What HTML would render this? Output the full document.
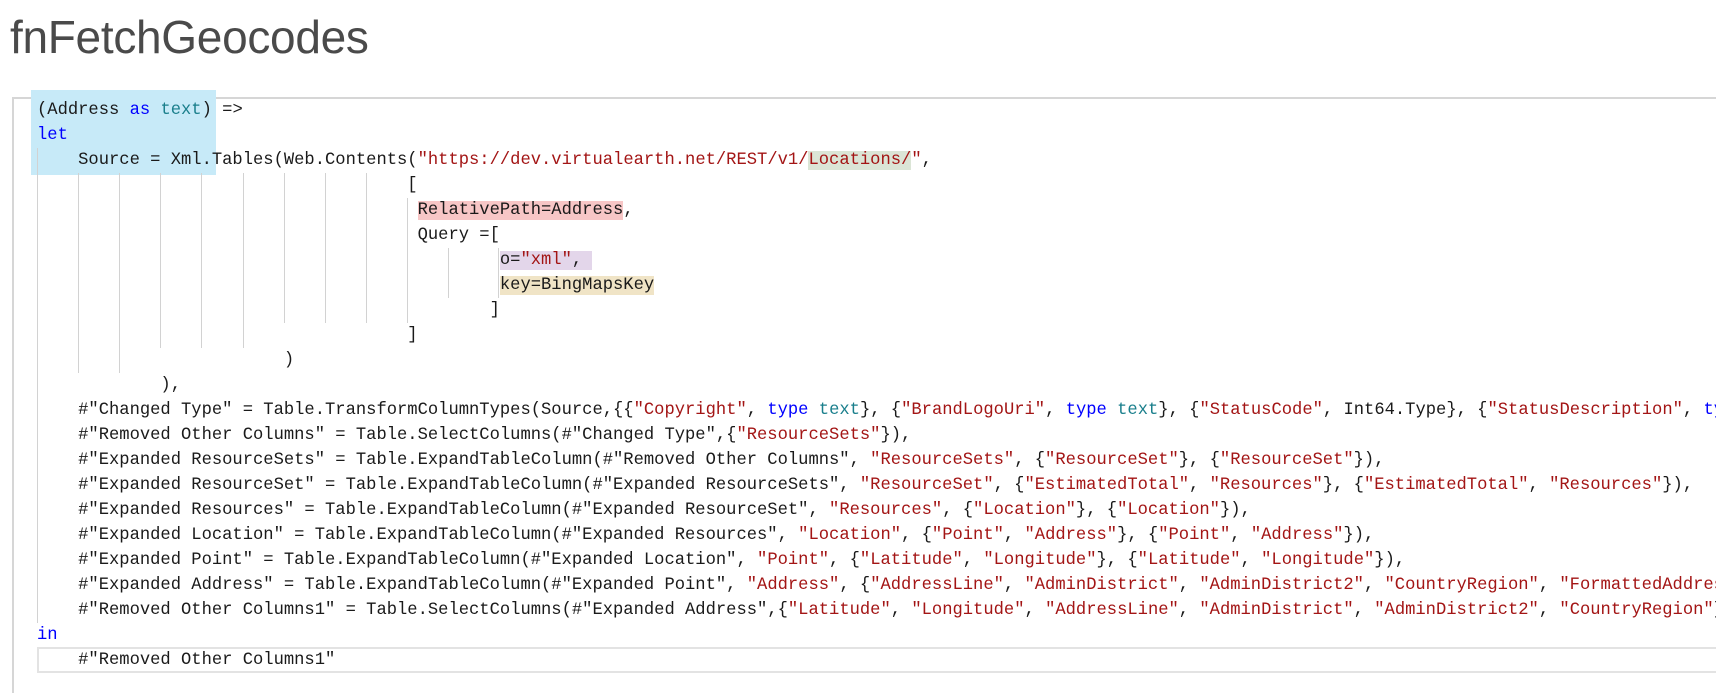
<!DOCTYPE html>
<html><head><meta charset="utf-8"><style>
html,body{margin:0;padding:0;background:#fff;width:1716px;height:693px;overflow:hidden;position:relative}
.t{position:absolute;left:10px;top:14px;font:46px/46px "Liberation Sans",sans-serif;color:#4a4a4a;letter-spacing:-0.3px}
.box{position:absolute;left:12px;top:97px;width:1760px;height:620px;border-left:2px solid #d6d6d6;border-top:2px solid #d6d6d6}
.hl{position:absolute;left:31px;top:90px;width:185px;height:85px;background:#c7eaf8}
.cur{position:absolute;left:37px;top:647px;width:1720px;height:22px;border:2px solid #e3e3e3;border-right:none}
.wrap{position:absolute;left:0;top:0;width:1716px;height:693px;overflow:hidden}
.l{position:absolute;left:37px;height:25px;font:17.15px/25px "Liberation Mono",monospace;white-space:pre;color:#1a1a1a}
.k{color:#0000ff}.y{color:#1a7f8c}.s{color:#a31515}
.g{position:absolute;width:1px;background:#d2d2d2}
.b1{background:#dbe5d6}.b2{background:#f7c6c6}.b3{background:#e3d6ea}.b4{background:#f0e4c6}
</style></head><body><div class="wrap">
<div class="t">fnFetchGeocodes</div>
<div class="box"></div>
<div class="hl"></div>
<div class="cur"></div>
<div class="g" style="left:37px;top:148px;height:475px"></div>
<div class="g" style="left:78px;top:173px;height:200px"></div>
<div class="g" style="left:119px;top:173px;height:200px"></div>
<div class="g" style="left:160px;top:173px;height:175px"></div>
<div class="g" style="left:201px;top:173px;height:175px"></div>
<div class="g" style="left:243px;top:173px;height:175px"></div>
<div class="g" style="left:284px;top:173px;height:150px"></div>
<div class="g" style="left:325px;top:173px;height:150px"></div>
<div class="g" style="left:366px;top:173px;height:150px"></div>
<div class="g" style="left:407px;top:198px;height:125px"></div>
<div class="g" style="left:448px;top:248px;height:50px"></div>
<div class="g" style="left:498px;top:248px;height:50px"></div>

<div class="l" style="top:98px">(Address <span class="k">as</span> <span class="y">text</span>) =&gt;</div>
<div class="l" style="top:123px"><span class="k">let</span></div>
<div class="l" style="top:148px">    Source = Xml.Tables(Web.Contents(<span class="s">"https://dev.virtualearth.net/REST/v1/<span class="b1">Locations/</span>"</span>,</div>
<div class="l" style="top:173px">                                    [</div>
<div class="l" style="top:198px">                                     <span class="b2">RelativePath=Address</span>,</div>
<div class="l" style="top:223px">                                     Query =[</div>
<div class="l" style="top:248px">                                             <span class="b3">o=<span class="s">"xml"</span>, </span></div>
<div class="l" style="top:273px">                                             <span class="b4">key=BingMapsKey</span></div>
<div class="l" style="top:298px">                                            ]</div>
<div class="l" style="top:323px">                                    ]</div>
<div class="l" style="top:348px">                        )</div>
<div class="l" style="top:373px">            ),</div>
<div class="l" style="top:398px">    #"Changed Type" = Table.TransformColumnTypes(Source,{{<span class="s">"Copyright"</span>, <span class="k">type</span> <span class="y">text</span>}, {<span class="s">"BrandLogoUri"</span>, <span class="k">type</span> <span class="y">text</span>}, {<span class="s">"StatusCode"</span>, Int64.Type}, {<span class="s">"StatusDescription"</span>, <span class="k">type</span> <span class="y">text</span>}})</div>
<div class="l" style="top:423px">    #"Removed Other Columns" = Table.SelectColumns(#"Changed Type",{<span class="s">"ResourceSets"</span>}),</div>
<div class="l" style="top:448px">    #"Expanded ResourceSets" = Table.ExpandTableColumn(#"Removed Other Columns", <span class="s">"ResourceSets"</span>, {<span class="s">"ResourceSet"</span>}, {<span class="s">"ResourceSet"</span>}),</div>
<div class="l" style="top:473px">    #"Expanded ResourceSet" = Table.ExpandTableColumn(#"Expanded ResourceSets", <span class="s">"ResourceSet"</span>, {<span class="s">"EstimatedTotal"</span>, <span class="s">"Resources"</span>}, {<span class="s">"EstimatedTotal"</span>, <span class="s">"Resources"</span>}),</div>
<div class="l" style="top:498px">    #"Expanded Resources" = Table.ExpandTableColumn(#"Expanded ResourceSet", <span class="s">"Resources"</span>, {<span class="s">"Location"</span>}, {<span class="s">"Location"</span>}),</div>
<div class="l" style="top:523px">    #"Expanded Location" = Table.ExpandTableColumn(#"Expanded Resources", <span class="s">"Location"</span>, {<span class="s">"Point"</span>, <span class="s">"Address"</span>}, {<span class="s">"Point"</span>, <span class="s">"Address"</span>}),</div>
<div class="l" style="top:548px">    #"Expanded Point" = Table.ExpandTableColumn(#"Expanded Location", <span class="s">"Point"</span>, {<span class="s">"Latitude"</span>, <span class="s">"Longitude"</span>}, {<span class="s">"Latitude"</span>, <span class="s">"Longitude"</span>}),</div>
<div class="l" style="top:573px">    #"Expanded Address" = Table.ExpandTableColumn(#"Expanded Point", <span class="s">"Address"</span>, {<span class="s">"AddressLine"</span>, <span class="s">"AdminDistrict"</span>, <span class="s">"AdminDistrict2"</span>, <span class="s">"CountryRegion"</span>, <span class="s">"FormattedAddress"</span>})</div>
<div class="l" style="top:598px">    #"Removed Other Columns1" = Table.SelectColumns(#"Expanded Address",{<span class="s">"Latitude"</span>, <span class="s">"Longitude"</span>, <span class="s">"AddressLine"</span>, <span class="s">"AdminDistrict"</span>, <span class="s">"AdminDistrict2"</span>, <span class="s">"CountryRegion"</span>})</div>
<div class="l" style="top:623px"><span class="k">in</span></div>
<div class="l" style="top:648px">    #"Removed Other Columns1"</div>
</div></body></html>
